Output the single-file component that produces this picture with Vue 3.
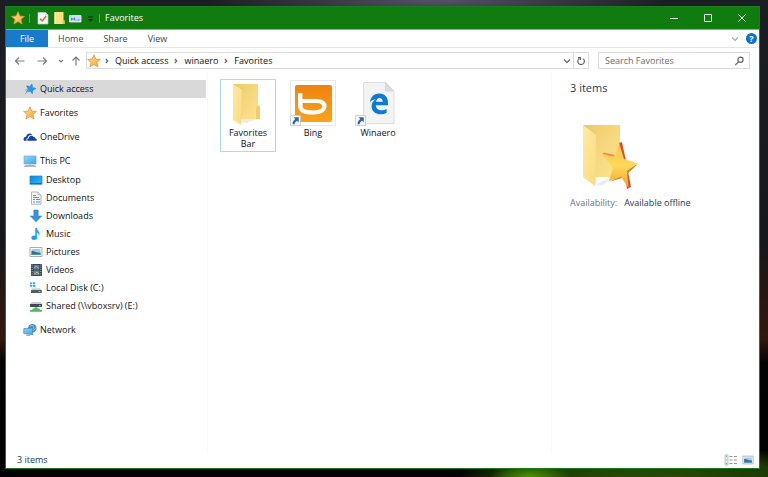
<script setup>
import { ref } from 'vue'

const quickTools = [
  { icon: 'properties', label: 'Properties' },
  { icon: 'folder-small', label: 'New folder' },
  { icon: 'rename', label: 'Rename' },
  { icon: 'customize', label: 'Customize Quick Access Toolbar' },
]
const tabs = ['Home', 'Share', 'View']
const crumbs = ['Quick access', 'winaero', 'Favorites']
const groups = [
  { name: 'Quick access', icon: 'pin-star' },
  { name: 'Favorites', icon: 'star' },
  { name: 'OneDrive', icon: 'cloud' },
  {
    name: 'This PC',
    icon: 'pc',
    children: [
      { name: 'Desktop', icon: 'desktop' },
      { name: 'Documents', icon: 'document' },
      { name: 'Downloads', icon: 'download' },
      { name: 'Music', icon: 'music' },
      { name: 'Pictures', icon: 'picture' },
      { name: 'Videos', icon: 'video' },
      { name: 'Local Disk (C:)', icon: 'disk' },
      { name: 'Shared (\\\\vboxsrv) (E:)', icon: 'shared' },
    ],
  },
  { name: 'Network', icon: 'network' },
]
const files = [
  { name: 'Favorites Bar', icon: 'folder-large' },
  { name: 'Bing', icon: 'bing' },
  { name: 'Winaero', icon: 'edge' },
]
const current = ref('Quick access')
const selected = ref('Favorites Bar')
const query = ref('')
</script>

<template>
  <div class="wallpaper">
    <svg class="defs" aria-hidden="true">
      <defs>
        <linearGradient id="g-star" x1="0" y1="0" x2="1" y2="1">
          <stop offset="0" stop-color="#ffe48a" /><stop offset="1" stop-color="#f6a52c" />
        </linearGradient>
        <linearGradient id="g-back" x1="0" y1="0" x2="1" y2="1">
          <stop offset="0" stop-color="#ecca6a" /><stop offset="1" stop-color="#ffe590" />
        </linearGradient>
        <linearGradient id="g-flap" x1="0" y1="0" x2="1" y2="1">
          <stop offset="0" stop-color="#ffe9a2" /><stop offset="1" stop-color="#fbdb7d" />
        </linearGradient>
        <linearGradient id="g-blue" x1="0" y1="0" x2="1" y2="1">
          <stop offset="0" stop-color="#8fd8fb" /><stop offset="1" stop-color="#3aa7e6" />
        </linearGradient>
        <linearGradient id="g-desk" x1="0" y1="0" x2="1" y2="1">
          <stop offset="0" stop-color="#0a84dc" /><stop offset="1" stop-color="#37b8fa" />
        </linearGradient>
        <linearGradient id="g-bing" x1="0" y1="0" x2="0" y2="1">
          <stop offset="0" stop-color="#ee8210" /><stop offset="1" stop-color="#fba31a" />
        </linearGradient>
        <linearGradient id="g-gold" x1="0" y1="0" x2="0" y2="1">
          <stop offset="0" stop-color="#fbc34e" /><stop offset="0.5" stop-color="#fcd95a" /><stop offset="1" stop-color="#f6a22c" />
        </linearGradient>
      </defs>
      <symbol id="star" viewBox="0 0 14 14">
        <path d="M7 .8 8.8 5.1 13.4 5.4 9.9 8.4 11.1 13 7 10.5 2.9 13 4.1 8.4 .6 5.4 5.2 5.1Z" fill="url(#g-star)" stroke="#dd9350" stroke-width=".8" stroke-linejoin="round" />
      </symbol>
      <symbol id="pin-star" viewBox="0 0 14 14">
        <path d="M9 2 9.6 5.4 13 6.6 9.8 8.2 9.4 11.8 7 9.3 3.6 10 5.1 6.9 3.6 3.8 6.8 4.5Z" fill="#209bea" stroke="#268bd0" stroke-width=".6" />
        <path d="M2 12 6 8.4M2 8.2l2-.6" stroke="#69b6e8" stroke-width="1" />
      </symbol>
      <symbol id="cloud" viewBox="0 0 14 14">
        <path d="M.8 10.5C0 8.3 1.4 7 3 6.8 3.6 3.4 7.4 2.2 9.3 5 6.4 4.7 5 6.1 4.8 7.7 3.4 8.2 3.2 9.7 3.8 10.8H2.2Q1.2 10.8 .8 10.5Z" fill="#1744a5" />
        <path d="M4.6 10.8C3.7 9.5 4.6 8.3 5.7 8.2 5.9 5.2 9.8 4.9 10.6 7.1 12 6.9 12.5 8 12.4 8.6 14.3 8.8 14 10.8 12.8 10.8Z" fill="#1744a5" />
      </symbol>
      <symbol id="pc" viewBox="0 0 14 14">
        <path d="M1 2H13V10H1Z" fill="url(#g-blue)" stroke="#73abc8" stroke-width=".7" />
        <path d="M5.5 10.3h3v1.2h-3Z" fill="#bdccd7" /><path d="M1 12 3 11h8l2 1v1H1Z" fill="#a8b5c4" />
      </symbol>
      <symbol id="desktop" viewBox="0 0 14 14">
        <path d="M1 3H13V11.3H1Z" fill="url(#g-desk)" stroke="#1681bd" stroke-width=".7" /><path d="M1 10.5H13" stroke="#1a70a5" />
      </symbol>
      <symbol id="document" viewBox="0 0 14 14">
        <path d="M2.5 1H9L12 4V13.3H2.5Z" fill="#f8fafb" stroke="#98a2aa" stroke-width=".8" /><path d="M9 1V4H12" fill="#d9e0e6" stroke="#9ba4ab" stroke-width=".6" />
        <path d="M4 4.5h3M4 6.5h6M4 8.5h2M7 8.5h4M4 11h2M7 11h4" stroke="#3a9bd4" stroke-width="1.2" />
      </symbol>
      <symbol id="download" viewBox="0 0 14 14"><path d="M4.8 1H9.2V7H12.8L7 12.8 1.2 7H4.8Z" fill="#3a91df" stroke="#2b78bd" stroke-width=".5" /></symbol>
      <symbol id="music" viewBox="0 0 14 14">
        <ellipse cx="5.2" cy="10.7" rx="2.8" ry="2.2" fill="#1ba1ef" /><path d="M6.3 1H7.8C8.1 4 12 4.4 10 9.5 9.8 6.8 9.2 6 7.9 5.5V11H6.3Z" fill="#1ba1ef" />
      </symbol>
      <symbol id="picture" viewBox="0 0 14 14">
        <path d="M1 2.5H13V11.5H1Z" fill="#fff" stroke="#9da5ae" stroke-width=".9" /><path d="M2.5 4H11.5V10H2.5Z" fill="#9ecdf1" />
        <path d="M2.5 6C5 5.5 7 8 11.5 7.6V10H2.5Z" fill="#396e80" /><path d="M2.5 9h9v1h-9Z" fill="#5192b9" />
      </symbol>
      <symbol id="video" viewBox="0 0 14 14">
        <path d="M2 1H13V13H2Z" fill="#343b48" /><path d="M4.5 1.8h6v4.8h-6Z" fill="#467cbe" /><path d="M4.5 7.4h6v4.8h-6Z" fill="#5e87a8" />
        <path d="M5 5.5 7 3l3 2.6M5 11.5 8 9l2 2" stroke="#d2b556" fill="none" /><path d="M3.1 1.5V13M11.9 1.5V13" stroke="#ced3da" stroke-width="1" stroke-dasharray="1 1.2" />
      </symbol>
      <symbol id="disk" viewBox="0 0 14 14">
        <path d="M1 1.5h2.2v1.8H1ZM4 1.2h2.3v2.1H4ZM1 4h2.2v1.8H1ZM4 4h2.3v2.1H4Z" fill="#22b2ef" />
        <path d="M3.5 7.3H11L12.5 9H2.3Z" fill="#ccd1d4" /><path d="M2 9H12.7V12H2Z" fill="#545b61" /><path d="M9.5 10.5h1.6" stroke="#7de582" />
      </symbol>
      <symbol id="shared" viewBox="0 0 14 14">
        <path d="M2.5 3H11.5L13 5H1Z" fill="#cbd0d3" /><path d="M1 5H13V8H1Z" fill="#444b50" /><path d="M10 6.6h1.6" stroke="#8be590" />
        <path d="M5.5 8.2H8.5V9.6H10.8V11H13V12.8H1V11H3.5V9.6H5.5Z" fill="#4eb85c" />
      </symbol>
      <symbol id="network" viewBox="0 0 14 14">
        <circle cx="9.3" cy="5.2" r="4.3" fill="#4f8fbf" /><path d="M7 3.5 9 2l2 2-1 2M10 8l3-3" stroke="#a8d8e7" fill="none" stroke-width=".8" />
        <path d="M.8 5.6 9.8 4.9V11.5L.8 10.6Z" fill="url(#g-blue)" stroke="#3b83af" stroke-width=".7" /><path d="M3 13 4 11.3h2.5l1 1.7Z" fill="#8fb9d2" />
      </symbol>
      <symbol id="properties" viewBox="0 0 14 14">
        <path d="M2 1.5H9.5L12 4V13H2Z" fill="#fafcfe" stroke="#bdc7cf" stroke-width=".7" /><path d="M9.5 1.5V4H12" fill="#cbd4dc" />
        <path d="M4 7.8 6.2 10 10.2 5" fill="none" stroke="#e4633e" stroke-width="1.5" />
      </symbol>
      <symbol id="folder-small" viewBox="0 0 14 14">
        <path d="M2.5 1H11.5V9.5H12.5V13H2.5Z" fill="#ffdf83" /><path d="M10.5 9.5h2V13h-2Z" fill="#f0bf59" /><path d="M2.5 1 4 2.5V13H2.5Z" fill="#fff0ae" />
      </symbol>
      <symbol id="rename" viewBox="0 0 14 14">
        <path d="M1.5 4.5H13V11H1.5Z" fill="#c7dcf4" stroke="#e6effa" stroke-width=".8" /><path d="M3.5 9.3V6.8L5 8.7 6.5 6.8V9.3M7.5 9h1M9.5 9h2" fill="none" stroke="#5572b1" stroke-width=".9" />
      </symbol>
      <symbol id="customize" viewBox="0 0 14 14"><path d="M4 6h5" stroke="#092f0a" /><path d="M4 8h5L6.5 10.5Z" fill="#092f0a" /></symbol>
      <symbol id="folder-large" viewBox="0 0 46 46">
        <path d="M11 42 17 39H32L22 43Z" fill="#ddd" opacity=".6" />
        <path d="M8 4H33V25L35 27V39H13Z" fill="url(#g-back)" /><path d="M33 25 35 27V39H31V27Z" fill="#f1cd72" />
        <path d="M8 4 17 10V33L16 45 8 40Z" fill="url(#g-flap)" /><path d="M17 10V33L16 38" fill="none" stroke="#edd087" stroke-width=".6" />
      </symbol>
      <symbol id="shortcut" viewBox="0 0 12 12">
        <path d="M.5.5h11v11H.5Z" fill="#f4f6f8" stroke="#c5cbd1" /><path d="M4 2.5H9.5V8L7.7 6.4C6 7.6 5.2 8.4 5 10H2.8C2.6 7.5 4.1 5.8 5.8 4.4Z" fill="#2f659e" />
      </symbol>
      <symbol id="bing" viewBox="0 0 46 46">
        <path d="M.5.5h45v45H.5Z" fill="#fff" stroke="#e8e8e8" /><rect x="5" y="5" width="37" height="37" rx="2" fill="url(#g-bing)" />
        <path d="M8 13H12.4V26H8Z" fill="#fff" />
        <path d="M10.2 21H27C37.5 21 37.5 32.5 24 32.5 13 32.5 10.2 30.5 10.2 25Z" fill="none" stroke="#fff" stroke-width="4.2" />
        <use href="#shortcut" x="0" y="35" width="11" height="11" />
      </symbol>
      <symbol id="edge" viewBox="0 0 46 46">
        <path d="M8.5 2.5H30.5L39 11V43.5H8.5Z" fill="#f3f3f3" stroke="#ddd" /><path d="M30.5 2.5V11H39Z" fill="#ddd" stroke="#cfcfcf" stroke-width=".7" />
        <path d="M14.8 22.6C15.6 16.4 19.6 13.4 24.3 13.4 30.1 13.4 33 17.6 33 22.6V25.3H20.9C21.1 31 27.6 31.4 31.6 28.8V32.9C25 36.2 16.6 33.6 16.6 26.2 16.6 23 18.4 20.6 20.8 19.5 18.4 19.3 16.2 20.4 14.8 22.6ZM21.1 21.8H27.8C27.8 19.4 26.6 18 24.6 18S21.5 19.4 21.1 21.8Z" fill="#0b7bd5" />
        <use href="#shortcut" x="0" y="35" width="11" height="11" />
      </symbol>
      <symbol id="folder-favorite" viewBox="0 0 58 66">
        <path d="M12 62 20 57 34 53 20 61Z" fill="#ddd" opacity=".6" /><path d="M1 1H38V53H14L1 49Z" fill="url(#g-back)" />
        <path d="M1 1 14 11V43L13 62 1 53Z" fill="url(#g-flap)" /><path d="M14 11V43L13 60" fill="none" stroke="#f3da92" stroke-width=".8" />
        <path d="M37 19 40 18 44 37 49 63 45 65Z" fill="#d7522b" /><path d="M20 30 22 28.5 33 31 31 34Z" fill="#f28b55" /><path d="M27 58 39 52 44 45 56 40 46 49 40 54Z" fill="#bd813e" />
        <path d="M37 19 42 35 56 39.5 45 47 46.5 64 39 53 27 57 31 44 20 30 33 33Z" fill="url(#g-gold)" />
      </symbol>
      <symbol id="back" viewBox="0 0 12 12"><path d="M5 2.5 1.5 6 5 9.5M1.8 6H10.5" /></symbol>
      <symbol id="forward" viewBox="0 0 12 12"><path d="M7 2.5 10.5 6 7 9.5M10.2 6H1.5" /></symbol>
      <symbol id="up" viewBox="0 0 12 12"><path d="M2.5 5.5 6 2 9.5 5.5M6 2.3V10.5" /></symbol>
      <symbol id="down" viewBox="0 0 12 12"><path d="M3 4.5 6 7.5 9 4.5" /></symbol>
      <symbol id="down-small" viewBox="0 0 12 12"><path d="M4 5 6 7 8 5" /></symbol>
      <symbol id="right" viewBox="0 0 12 12"><path d="M4.8 4 6.8 6 4.8 8" /></symbol>
      <symbol id="refresh" viewBox="0 0 12 12"><path d="M8.2 3.8A3.3 3.3 0 1 1 4.2 3.6M3 2.6H5.4V5" /></symbol>
      <symbol id="search" viewBox="0 0 12 12"><circle cx="7.5" cy="4.8" r="2.6" /><path d="M5.5 6.8 2.3 10" /></symbol>
    </svg>

    <main class="window">
      <header class="titlebar">
        <svg class="icon"><use href="#star" /></svg>
        <span class="rule"></span>
        <div class="tools">
          <button v-for="t in quickTools" :key="t.icon" :aria-label="t.label"><svg class="icon"><use :href="'#' + t.icon" /></svg></button>
        </div>
        <span class="rule"></span>
        <h1>Favorites</h1>
        <div class="controls">
          <button aria-label="Minimize"><svg viewBox="0 0 10 10"><path d="M1 5.5H9" /></svg></button>
          <button aria-label="Maximize"><svg viewBox="0 0 10 10"><path d="M1.5 1.5H8.5V8.5H1.5Z" /></svg></button>
          <button aria-label="Close"><svg viewBox="0 0 10 10"><path d="M1.5 1.5 8.5 8.5M8.5 1.5 1.5 8.5" /></svg></button>
        </div>
      </header>

      <nav class="ribbon" aria-label="Ribbon">
        <button class="file">File</button>
        <button v-for="t in tabs" :key="t">{{ t }}</button>
        <div class="ribbon-end">
          <button class="expand" aria-label="Expand the Ribbon"><svg class="glyph"><use href="#down" /></svg></button>
          <button class="help" aria-label="Help">?</button>
        </div>
      </nav>

      <div class="address-row">
        <div class="history">
          <button aria-label="Back"><svg class="glyph"><use href="#back" /></svg></button>
          <button aria-label="Forward"><svg class="glyph"><use href="#forward" /></svg></button>
          <button class="recent" aria-label="Recent locations"><svg class="glyph"><use href="#down-small" /></svg></button>
          <button class="parent" aria-label="Up"><svg class="glyph"><use href="#up" /></svg></button>
        </div>
        <div class="address">
          <svg class="icon"><use href="#star" /></svg>
          <template v-for="c in crumbs" :key="c">
            <svg class="glyph"><use href="#right" /></svg>
            <a href="#">{{ c }}</a>
          </template>
          <button class="previous" aria-label="Previous locations"><svg class="glyph"><use href="#down" /></svg></button>
          <button class="refresh" aria-label="Refresh"><svg class="glyph"><use href="#refresh" /></svg></button>
        </div>
        <label class="search">
          <input v-model="query" type="search" placeholder="Search Favorites" aria-label="Search Favorites" />
          <svg class="glyph"><use href="#search" /></svg>
        </label>
      </div>

      <div class="body">
        <nav class="tree" aria-label="Folders">
          <div v-for="g in groups" :key="g.name" class="group">
            <button class="node" :class="{ active: current === g.name }" @click="current = g.name">
              <svg class="icon"><use :href="'#' + g.icon" /></svg>{{ g.name }}
            </button>
            <div v-if="g.children" class="children">
              <button v-for="n in g.children" :key="n.name" class="node" :class="{ active: current === n.name }" @click="current = n.name">
                <svg class="icon"><use :href="'#' + n.icon" /></svg>{{ n.name }}
              </button>
            </div>
          </div>
        </nav>

        <section class="files" aria-label="Files">
          <button v-for="f in files" :key="f.name" class="tile" :class="{ selected: selected === f.name }" @click="selected = f.name">
            <svg class="thumb"><use :href="'#' + f.icon" /></svg>
            <span>{{ f.name }}</span>
          </button>
        </section>

        <aside class="details">
          <h2>3 items</h2>
          <svg class="preview"><use href="#folder-favorite" /></svg>
          <dl><dt>Availability:</dt><dd>Available offline</dd></dl>
        </aside>
      </div>

      <footer class="status">
        <span>3 items</span>
        <div class="views">
          <button aria-label="Details view">
            <svg viewBox="0 0 14 12"><path d="M1 1h3v10H1Z" fill="#eee" stroke="#aaa" stroke-width=".7" /><path d="M2 2.5h1M2 6h1" stroke="#8bad9b" /><path d="M2 9.5h1" stroke="#de6b65" /><path d="M5.5 2.5h3M10 2.5h3M5.5 6h3M10 6h3M5.5 9.5h3M10 9.5h3" stroke="#888" stroke-width=".9" /></svg>
          </button>
          <button aria-label="Large thumbnails"><svg class="icon"><use href="#picture" /></svg></button>
        </div>
      </footer>
    </main>
  </div>
</template>

<style>
body {
  margin: 0;
}
</style>

<style scoped>
.wallpaper {
  box-sizing: border-box;
  min-height: 100vh;
  display: flex;
  padding: 6px 8px 8px 5px;
  font: 9px/12px "Open Sans", "Noto Sans", sans-serif;
  color: #111;
  background:
    radial-gradient(ellipse 40px 14px at 69% 100%, #4b9406, transparent),
    radial-gradient(ellipse 190px 40px at 84% 101%, #294f06, #1c3804 75%, transparent),
    radial-gradient(ellipse 230px 26px at 57% 0, #555266, transparent),
    linear-gradient(#1b1e23 0, #16181c 50%, #33170d 71%, #030303 76%, #020202);
}
.defs {
  position: absolute;
  width: 0;
  height: 0;
}
button {
  display: flex;
  align-items: center;
  justify-content: center;
  margin: 0;
  padding: 0;
  border: 0;
  background: none;
  font: inherit;
  color: inherit;
}
a {
  color: inherit;
  text-decoration: none;
}
.window {
  flex: 1;
  min-width: 0;
  display: flex;
  flex-direction: column;
  border: 1px solid #187d18;
  background: #fff;
}
.icon {
  flex: none;
  width: 14px;
  height: 14px;
}
.glyph {
  flex: none;
  width: 12px;
  height: 12px;
  fill: none;
  stroke: #666;
  stroke-width: 1.2;
}
.titlebar {
  display: flex;
  align-items: center;
  height: 22px;
  padding-left: 5px;
  background: #107c10;
  border-bottom: 1px solid #7bb87b;
  color: #fff;
}
.rule {
  width: 1px;
  height: 9px;
  margin: 0 4px;
  background: #5ca35c;
}
.tools {
  display: flex;
  gap: 2px;
  padding-left: 2px;
}
.tools + .rule {
  margin: 0 5px 0 1px;
}
h1,
h2 {
  margin: 0;
  font: inherit;
}
.controls {
  display: flex;
  align-self: stretch;
  margin-left: auto;
}
.controls button {
  width: 34px;
}
.controls svg {
  width: 10px;
  height: 10px;
  fill: none;
  stroke: #e8f5e8;
}
.ribbon {
  display: flex;
  height: 17px;
  border-bottom: 1px solid #e6e6e6;
  color: #444;
}
.ribbon > button {
  padding: 0 10px;
}
.ribbon .file {
  width: 42px;
  background: #1979ca;
  color: #fff;
}
.ribbon-end {
  display: flex;
  align-items: center;
  gap: 5px;
  margin-left: auto;
  padding-right: 2px;
}
.expand .glyph {
  stroke: #aaa;
}
.help {
  width: 11px;
  height: 11px;
  border-radius: 50%;
  background: #0873cd;
  color: #fff;
  font-weight: 700;
}
.address-row {
  display: flex;
  align-items: center;
  height: 25px;
  padding-right: 9px;
}
.history {
  display: flex;
  align-items: center;
  width: 80px;
}
.history button {
  width: 22px;
}
.history button:first-child {
  margin-left: 3px;
}
.history .recent,
.history .parent {
  width: 15px;
}
.history .glyph {
  stroke: #7c7c7c;
}
.address {
  flex: 1;
  display: flex;
  align-items: center;
  height: 15px;
  border: 1px solid #dcdcdc;
}
.address a {
  margin: 0 2px;
}
.previous {
  margin-left: auto;
}
.refresh {
  width: 15px;
  height: 15px;
  border-left: 1px solid #dcdcdc;
}
.search {
  box-sizing: border-box;
  display: flex;
  align-items: center;
  width: 152px;
  height: 17px;
  margin-left: 9px;
  padding: 0 4px 0 6px;
  border: 1px solid #dcdcdc;
}
.search input {
  flex: 1;
  min-width: 0;
  padding: 0;
  border: 0;
  outline: 0;
  background: none;
  font: inherit;
}
.search input::placeholder {
  color: #6d6d6d;
  opacity: 1;
}
.body {
  flex: 1;
  display: flex;
}
.tree {
  box-sizing: border-box;
  display: flex;
  flex-direction: column;
  gap: 6px;
  width: 202px;
  padding: 7px 1px 12px 0;
  border-right: 1px solid #f8f8f8;
}
.node {
  width: 100%;
  height: 18px;
  justify-content: flex-start;
  gap: 3px;
  padding-left: 17px;
}
.node.active {
  background: #d9d9d9;
}
.children {
  padding-top: 1px;
}
.children .node {
  padding-left: 23px;
}
.files {
  flex: 1;
  display: flex;
  align-items: flex-start;
  gap: 9px;
  padding: 6px 12px;
}
.tile {
  box-sizing: border-box;
  flex-direction: column;
  justify-content: flex-start;
  width: 56px;
  min-height: 73px;
  line-height: 11px;
  border: 1px solid transparent;
}
.tile.selected {
  border-color: #a9d9f3;
}
.thumb {
  width: 46px;
  height: 46px;
  margin-bottom: 1px;
}
.details {
  box-sizing: border-box;
  width: 208px;
  padding: 6px 18px;
  border-left: 1px solid #f8f8f8;
}
.details h2 {
  font-size: 11px;
  line-height: 18px;
  color: #1e395b;
}
.preview {
  display: block;
  width: 58px;
  height: 66px;
  margin: 27px 0 7px 12px;
}
.details dl {
  display: flex;
  gap: 7px;
  margin: 0;
}
.details dt {
  color: #687584;
}
.details dd {
  margin: 0;
  color: #1e395b;
}
.status {
  display: flex;
  align-items: center;
  justify-content: space-between;
  height: 17px;
  padding: 0 4px 0 11px;
  color: #1e395b;
}
.views {
  display: flex;
  align-items: center;
  gap: 3px;
}
.views svg {
  width: 14px;
  height: 12px;
}
</style>
